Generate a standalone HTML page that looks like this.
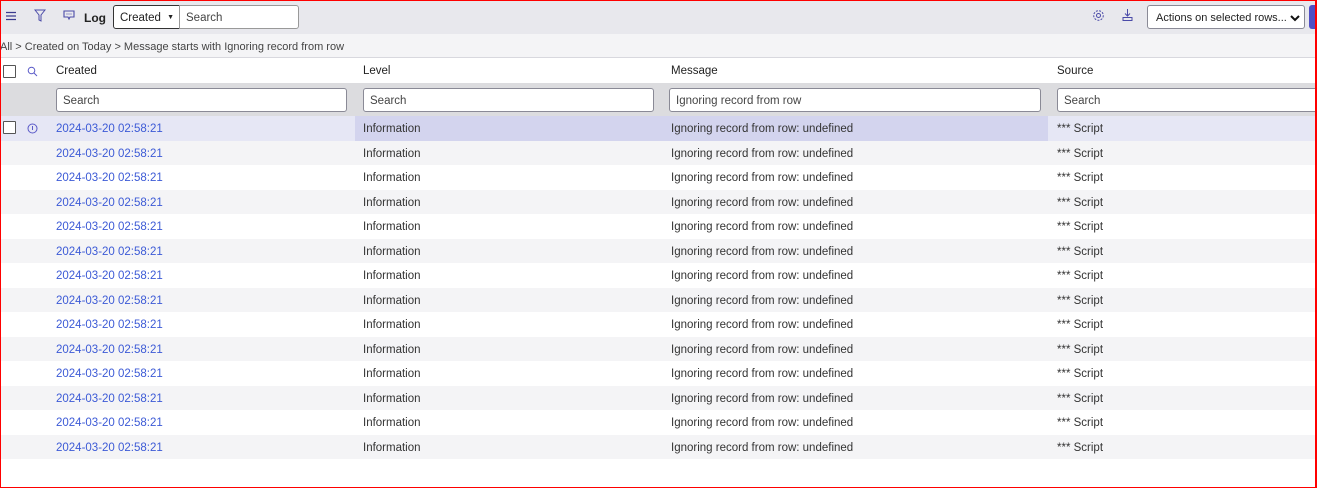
<!DOCTYPE html>
<html><head><meta charset="utf-8"><style>
*{box-sizing:border-box;margin:0;padding:0}
body{width:1317px;height:488px;overflow:hidden;background:#fff;font-family:"Liberation Sans",sans-serif;font-size:11.5px;color:#333;position:relative}
.a{position:absolute}
.frame{position:absolute;left:0;top:0;width:1317px;height:488px;border:1px solid #f00;border-right-width:2px;pointer-events:none;z-index:10}
.inp{position:absolute;height:24px;border:1px solid #8a8a96;border-radius:3px;background:#fff;padding:0 6px;line-height:24px;color:#444}
.row{position:absolute;left:0;width:1317px;height:24.5px}
.row span{position:absolute;top:7px}
.lnk{color:#3c5ad6}
.cb{position:absolute;width:13px;height:13px;border:1px solid #555;border-radius:1px;background:#fff}
</style></head><body>
<div class="a" style="left:0;top:0;width:1317px;height:34px;background:#e8e8ed"></div>
<div class="a" style="left:0;top:34px;width:1317px;height:24px;background:#f4f4f6;border-bottom:1px solid #d8d8de"></div>
<div class="a" style="left:0;top:83px;width:1317px;height:33px;background:#dcdcdf"></div>

<svg class="a" style="left:6px;top:11px" width="11" height="10"><path d="M0 1.5h10M0 5h10M0 8.5h10" stroke="#3b3b8f" stroke-width="1.3"/></svg>
<svg class="a" style="left:34px;top:9px" width="12" height="13"><path d="M1 1h10L7 6v6L5 11V6z" fill="none" stroke="#4a4aa8" stroke-width="1"/></svg>
<svg class="a" style="left:63px;top:10px" width="12" height="11"><path d="M1 1h10v6H7l-1 2-1-2H1z" fill="none" stroke="#4a4aa8" stroke-width="1.1"/><path d="M3.5 4h1M5.5 4h1M7.5 4h1" stroke="#4a4aa8"/></svg>
<div class="a" style="left:84px;top:11px;font-size:12px;font-weight:bold;color:#222">Log</div>
<div class="inp" style="left:113px;top:5px;width:67px;border-color:#333;border-radius:3px 0 0 3px;color:#222">Created<span style="position:absolute;right:5px;font-size:7px;top:0">▼</span></div>
<div class="inp" style="left:179px;top:5px;width:120px;border-radius:0 3px 3px 0;border-color:#999">Search</div>

<svg class="a" style="left:1092px;top:9px" width="13" height="13"><circle cx="6.5" cy="6.5" r="2" fill="none" stroke="#4a4aa8"/><circle cx="6.5" cy="6.5" r="4.8" fill="none" stroke="#4a4aa8" stroke-dasharray="2 1.3"/></svg>
<svg class="a" style="left:1122px;top:8px" width="11" height="14"><path d="M5.5 1v7M3 5.5l2.5 2.5L8 5.5" fill="none" stroke="#4a4aa8"/><rect x="1" y="9.5" width="9" height="3" fill="none" stroke="#4a4aa8"/></svg>
<div class="inp" style="left:1147px;top:5px;width:158px;border-color:#8a8a96;color:#222;padding-left:8px;font-size:11px">Actions on selected rows...<svg style="position:absolute;right:4px;top:9px" width="10" height="7"><path d="M1 1l4 4 4-4" fill="none" stroke="#111" stroke-width="2"/></svg></div>
<div class="a" style="left:1309px;top:5px;width:8px;height:24px;background:#4f4fc4;border-radius:3px 0 0 3px"></div>

<div class="a" style="left:0;top:41px;color:#444;font-size:11px">All &gt; Created on Today &gt; Message starts with Ignoring record from row</div>

<div class="cb" style="left:3px;top:65px"></div>
<svg class="a" style="left:27px;top:66px" width="11" height="11"><circle cx="4.5" cy="4.5" r="3.3" fill="none" stroke="#5a5ac8"/><path d="M7 7l3 3" stroke="#5a5ac8"/></svg>
<div class="a" style="left:56px;top:65px;color:#222">Created</div>
<div class="a" style="left:363px;top:65px;color:#222">Level</div>
<div class="a" style="left:671px;top:65px;color:#222">Message</div>
<div class="a" style="left:1057px;top:65px;color:#222">Source</div>

<div class="inp" style="left:56px;top:88px;width:291px">Search</div>
<div class="inp" style="left:363px;top:88px;width:291px">Search</div>
<div class="inp" style="left:669px;top:88px;width:372px">Ignoring record from row</div>
<div class="inp" style="left:1057px;top:88px;width:270px">Search</div>

<div id="rows"></div>
<div class="frame"></div>
<script>
var h='';
for(var i=0;i<14;i++){
 var t=116+i*24.5;
 var bg=i==0?'#e6e7f5':(i%2?'#f4f4f6':'#fff');
 h+='<div class="row" style="top:'+t+'px;background:'+bg+'">';
 if(i==0){h+='<div style="position:absolute;left:355px;top:0;width:693px;height:24.5px;background:#d3d4ee"></div><div class="cb" style="left:3px;top:5px"></div><svg style="position:absolute;left:27px;top:7px" width="11" height="11"><circle cx="5.5" cy="5.5" r="4.5" fill="none" stroke="#5a5ac8"/><path d="M5.5 3v4" stroke="#5a5ac8"/></svg>';}
 h+='<span class="lnk" style="left:56px">2024-03-20 02:58:21</span><span style="left:363px">Information</span><span style="left:671px">Ignoring record from row: undefined</span><span style="left:1057px">*** Script</span></div>';
}
document.getElementById('rows').innerHTML=h;
</script>
</body></html>
